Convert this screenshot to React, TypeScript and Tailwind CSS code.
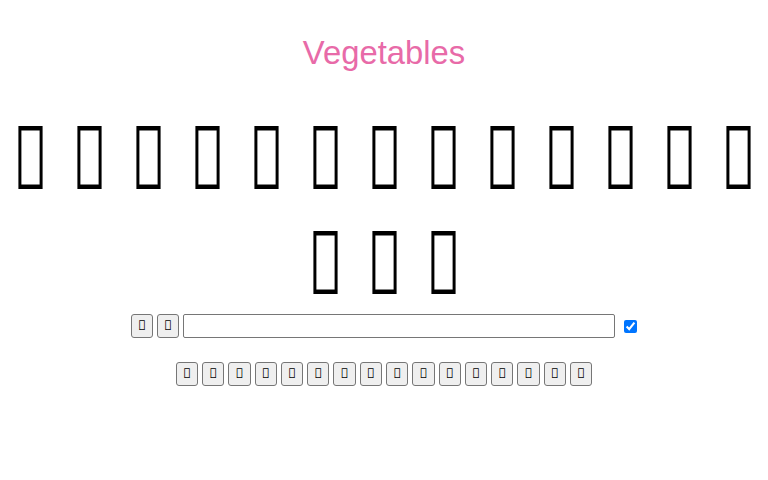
import { useState } from 'react';

const VEGGIES = Array.from({ length: 16 }, (_, i) => String.fromCodePoint(0x10fff0 + i));

const App = () => {
    const [picked, setPicked] = useState<string[]>(VEGGIES);
    const [text, setText] = useState('');
    const [checked, setChecked] = useState(true);

    return (
        <div className="min-h-screen bg-white text-center font-sans text-black">
            <h1 className="pt-[34px] font-['Liberation_Sans',Arial,sans-serif] text-[32.8px] leading-[37px] text-[#e86aa8]">Vegetables</h1>

            {/* Big emoji list */}
            <div className="mt-[32px] flex flex-wrap justify-center text-[88px] leading-[105px]">
                {picked.map((v, i) => (
                    <span key={i} className="w-[59px] shrink-0 text-center">
                        <span className="inline-block scale-x-[0.67]">{v}</span>
                    </span>
                ))}
            </div>

            {/* Controls */}
            <div className="mt-[1px] flex items-center justify-center gap-[4px] text-[13.33px]">
                <button
                    className="h-[24px] w-[22px] rounded-[3px] border border-[#767676] bg-[#efefef]"
                    onClick={() => setPicked([...picked, VEGGIES[0]])}
                >
                    {'\u{10FFFA}'}
                </button>
                <button
                    className="h-[24px] w-[22px] rounded-[3px] border border-[#767676] bg-[#efefef]"
                    onClick={() => setPicked(picked.slice(0, -1))}
                >
                    {'\u{10FFFB}'}
                </button>
                <input
                    className="h-[24px] w-[432px] rounded-[2px] border border-[#767676] px-[2px]"
                    value={text}
                    onChange={(e) => setText(e.target.value)}
                />
                <input
                    type="checkbox"
                    className="ml-[5px] h-[13px] w-[13px] accent-[#0075ff]"
                    checked={checked}
                    onChange={(e) => setChecked(e.target.checked)}
                />
            </div>

            {/* Small emoji buttons */}
            <div className="mt-[24px] flex justify-center gap-[4px] text-[13.33px]">
                {VEGGIES.map((v) => (
                    <button
                        key={v}
                        className="h-[24px] w-[22.27px] rounded-[3px] border border-[#767676] bg-[#efefef]"
                        onClick={() => setPicked([...picked, v])}
                    >
                        {v}
                    </button>
                ))}
            </div>
        </div>
    );
};

export default App;
